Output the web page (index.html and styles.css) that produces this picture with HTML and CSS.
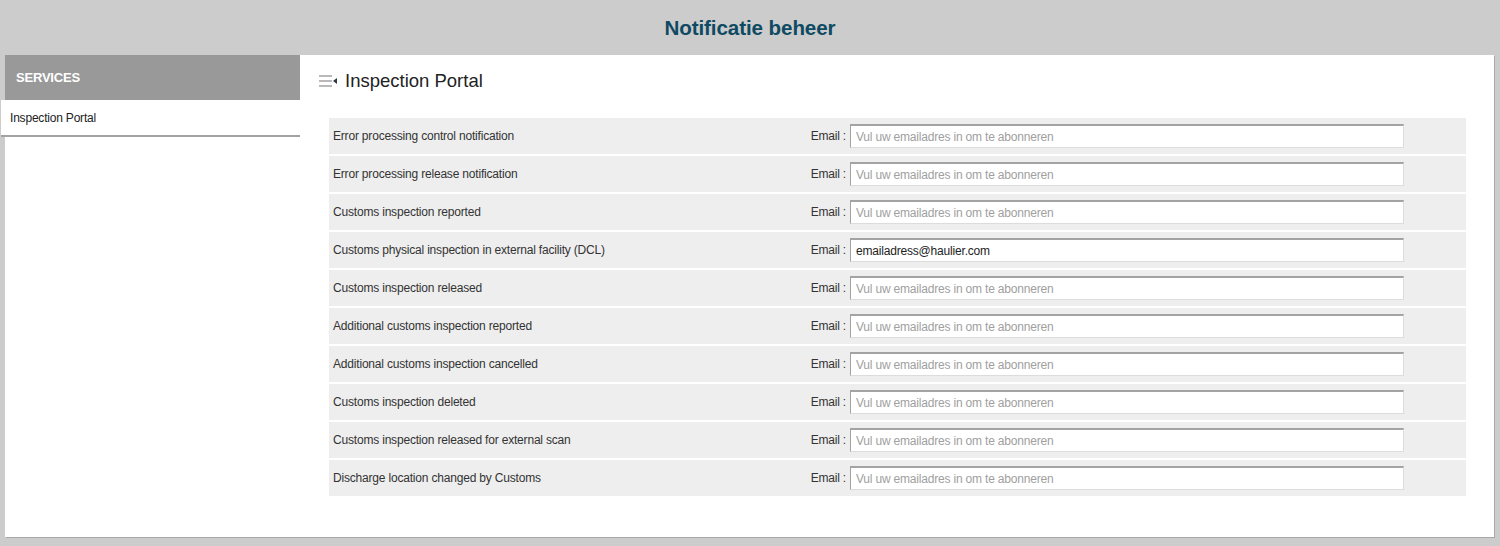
FILE: index.html
```html
<!DOCTYPE html>
<html lang="nl">
<head>
<meta charset="utf-8">
<title>Notificatie beheer</title>
<link rel="stylesheet" href="styles.css">
</head>
<body>
<header class="topbar"><h1 class="page-title">Notificatie beheer</h1></header>
<div class="panel">
  <aside class="sidebar">
    <div class="sidebar-head">SERVICES</div>
    <div class="sidebar-item">Inspection Portal</div>
  </aside>
  <main class="content">
    <div class="content-title">
      <svg class="menu-icon" width="18" height="14" viewBox="0 0 18 14">
        <rect x="0" y="1" width="13" height="2" fill="#b9b9b9"/>
        <rect x="0" y="6" width="13" height="2" fill="#b9b9b9"/>
        <rect x="0" y="11" width="13" height="2" fill="#b9b9b9"/>
        <polygon points="14,7 18,4 18,10" fill="#2d3a44"/>
      </svg>
      <h2>Inspection Portal</h2>
    </div>
    <div class="rows">
      <div class="row"><span class="label">Error processing control notification</span><span class="email">Email :</span><input class="field" placeholder="Vul uw emailadres in om te abonneren"></div>
      <div class="row"><span class="label">Error processing release notification</span><span class="email">Email :</span><input class="field" placeholder="Vul uw emailadres in om te abonneren"></div>
      <div class="row"><span class="label">Customs inspection reported</span><span class="email">Email :</span><input class="field" placeholder="Vul uw emailadres in om te abonneren"></div>
      <div class="row"><span class="label">Customs physical inspection in external facility (DCL)</span><span class="email">Email :</span><input class="field" value="emailadress@haulier.com" placeholder="Vul uw emailadres in om te abonneren"></div>
      <div class="row"><span class="label">Customs inspection released</span><span class="email">Email :</span><input class="field" placeholder="Vul uw emailadres in om te abonneren"></div>
      <div class="row"><span class="label">Additional customs inspection reported</span><span class="email">Email :</span><input class="field" placeholder="Vul uw emailadres in om te abonneren"></div>
      <div class="row"><span class="label">Additional customs inspection cancelled</span><span class="email">Email :</span><input class="field" placeholder="Vul uw emailadres in om te abonneren"></div>
      <div class="row"><span class="label">Customs inspection deleted</span><span class="email">Email :</span><input class="field" placeholder="Vul uw emailadres in om te abonneren"></div>
      <div class="row"><span class="label">Customs inspection released for external scan</span><span class="email">Email :</span><input class="field" placeholder="Vul uw emailadres in om te abonneren"></div>
      <div class="row"><span class="label">Discharge location changed by Customs</span><span class="email">Email :</span><input class="field" placeholder="Vul uw emailadres in om te abonneren"></div>
    </div>
  </main>
</div>
</body>
</html>
```
FILE: styles.css
```css
html, body {
  margin: 0;
  padding: 0;
}
body {
  background: #cccccc;
  font-family: "Liberation Sans", Arial, sans-serif;
  color: #333;
  height: 546px;
  overflow: hidden;
}
.topbar {
  height: 55px;
  display: flex;
  align-items: center;
  justify-content: center;
}
.page-title {
  margin: 0;
  font-size: 20.6px;
  font-weight: bold;
  color: #0f4a62;
  letter-spacing: -0.1px;
}
.panel {
  margin: 0 6px 0 5px;
  height: 482px;
  background: #fff;
  display: flex;
  box-shadow: 1px 1px 0 #a8a8a8;
}
.sidebar {
  width: 295px;
  flex: none;
}
.sidebar-head {
  height: 45px;
  background: #999999;
  color: #fff;
  font-weight: bold;
  font-size: 13px;
  letter-spacing: -0.2px;
  display: flex;
  align-items: center;
  padding-left: 11px;
}
.sidebar-item {
  margin-left: -4px;
  height: 35px;
  border-bottom: 2px solid #a2a2a2;
  background: #fff;
  font-size: 12px;
  letter-spacing: -0.2px;
  color: #222;
  display: flex;
  align-items: center;
  padding-left: 9px;
}
.content {
  flex: 1;
  padding: 12px 28px 0 29px;
}
.content-title {
  height: 28px;
  display: flex;
  align-items: center;
  gap: 8px;
  margin-left: -10px;
}
.menu-icon {
  flex: none;
}
.content-title h2 {
  margin: 0;
  font-size: 18.5px;
  font-weight: normal;
  color: #222;
}
.rows {
  margin-top: 23px;
  display: flex;
  flex-direction: column;
  gap: 2px;
}
.row {
  height: 36px;
  background: #eeeeee;
  display: grid;
  grid-template-columns: 1fr auto 554px;
  align-items: center;
  padding: 0 62px 0 4px;
  font-size: 12px;
  letter-spacing: -0.19px;
}
.label {
  color: #333;
}
.email {
  color: #333;
  padding-right: 4px;
}
.field {
  box-sizing: border-box;
  height: 24px;
  width: 554px;
  margin: 0;
  border-style: solid;
  border-width: 2px 1px 1px 1px;
  border-color: #a3a3a3 #dcdcdc #dcdcdc #a3a3a3;
  background: #fff;
  font-family: "Liberation Sans", Arial, sans-serif;
  font-size: 12px;
  letter-spacing: -0.19px;
  color: #222;
  padding: 0 5px;
  outline: none;
}
.field::placeholder {
  color: #a0a0a0;
}
```
